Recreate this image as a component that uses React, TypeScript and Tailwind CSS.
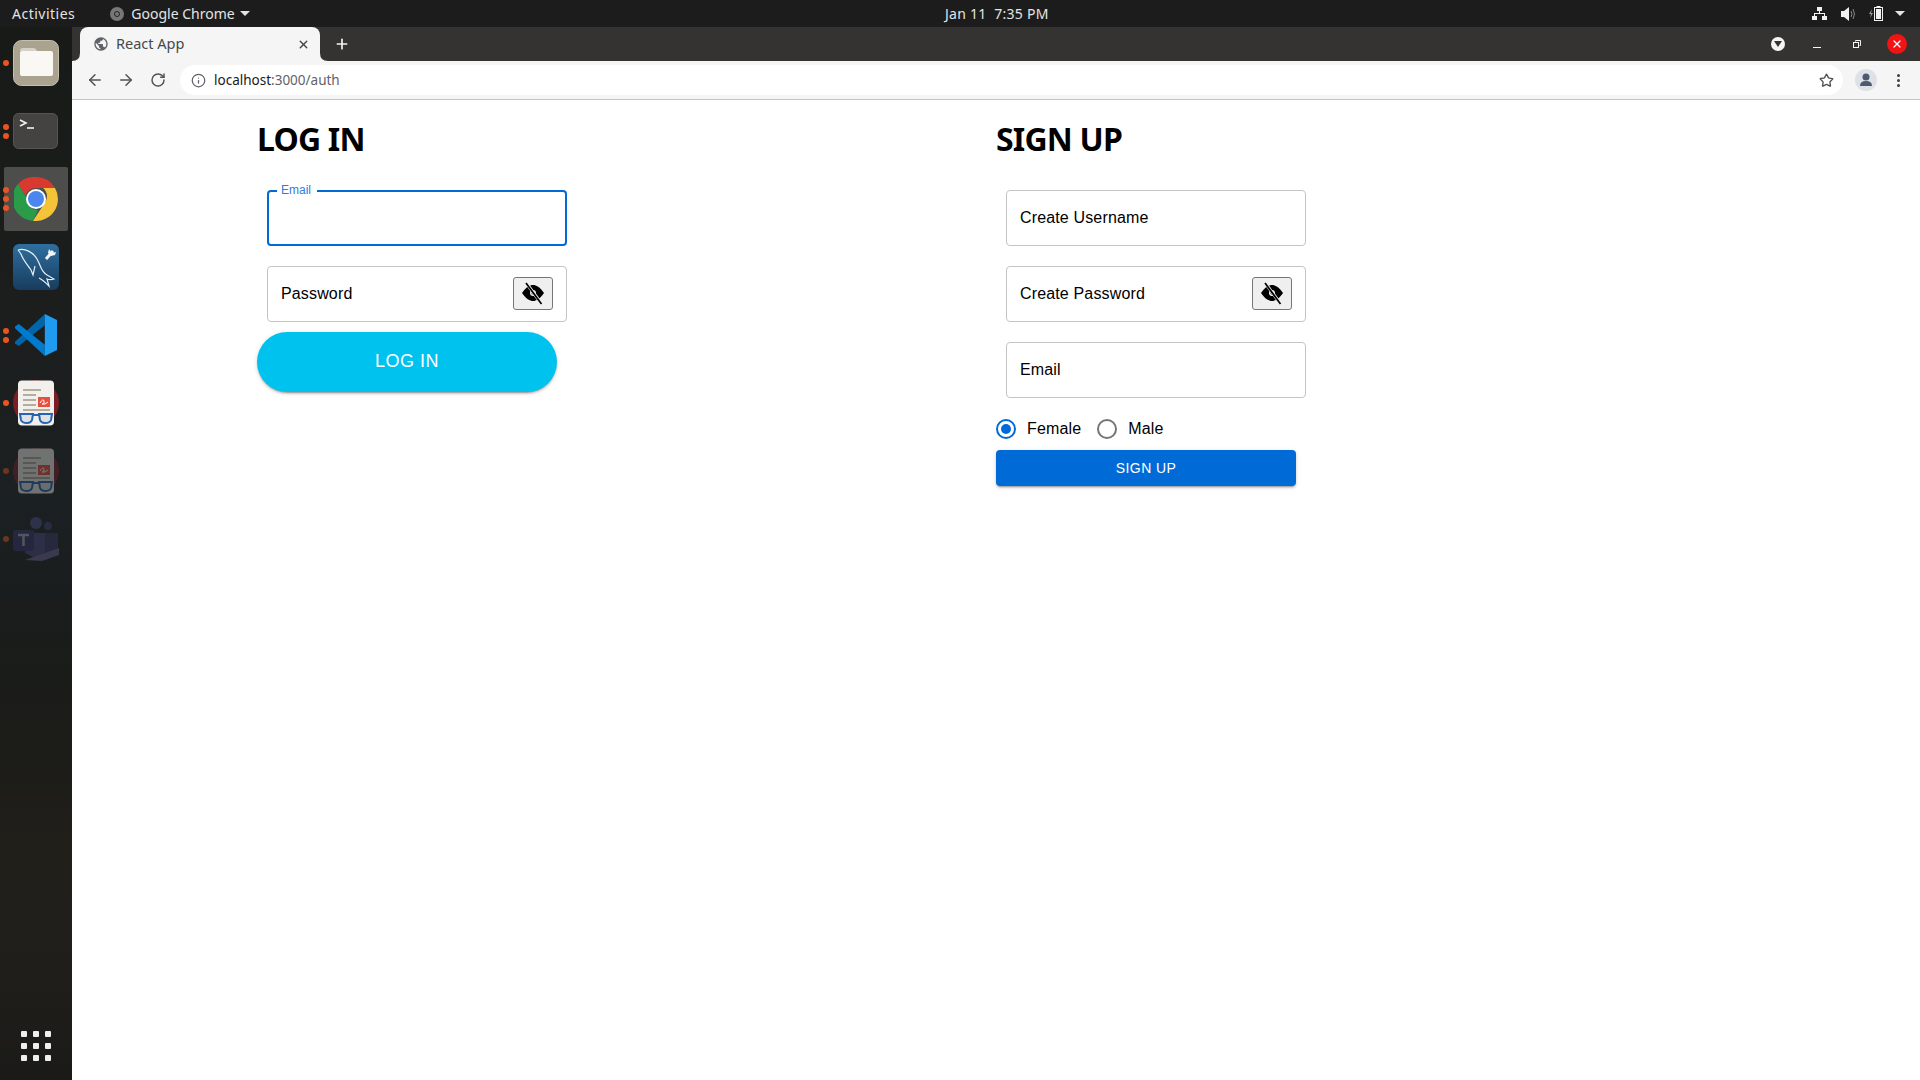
import { ReactNode } from "react";
import { ArrowLeft, ArrowRight, Info, Plus, RotateCw, Star, X } from "lucide-react";
import { MdPublic } from "react-icons/md";

const SANS = "font-['Liberation_Sans',Arial,sans-serif]";
const UI = "font-['Noto_Sans','Open_Sans',sans-serif]";

function EyeOffIcon() {
  return (
    <svg className="mb-[2px]" width="24" height="24" viewBox="0 0 24 24">
      <path d="M1 12C5 6 9 4 12 4C15 4 19 6 23 12C19 18 15 20 12 20C9 20 5 18 1 12Z" fill="#000" />
      <circle cx="12" cy="12" r="3" fill="#efefef" />
      <circle cx="12" cy="12" r="1.500" fill="#000" />
      <path d="M6 3L20 22" stroke="#efefef" strokeWidth="3" />
      <path d="M5 2L20.500 23" stroke="#000" strokeWidth="1.700" />
    </svg>
  );
}

function FilesIcon() {
  return (
    <svg width="46" height="46" viewBox="0 0 46 46">
      <rect x="0.5" y="0.5" width="45" height="45" rx="8" fill="#a9a390" stroke="#c4bfaf" />
      <path d="M7 11q0-3 3-3h10q3 0 4 3h-17z" fill="#d5d0c6" />
      <rect x="7" y="11" width="33" height="25" rx="2" fill="#f9f8f5" />
    </svg>
  );
}

function TerminalIcon() {
  return (
    <svg width="46" height="36" viewBox="0 0 46 36">
      <rect x="0.5" y="0.5" width="44" height="35" rx="5" fill="#444342" stroke="#555" />
      <path d="M7 7l6 3-6 3" fill="none" stroke="#f2f2f2" strokeWidth="1.6" />
      <path d="M14 15h7" stroke="#f2f2f2" strokeWidth="1.6" />
    </svg>
  );
}

function ChromeIcon() {
  return (
    <svg width="44" height="44" viewBox="0 0 44 44">
      <path d="M22 0a22 22 0 0 1 19 11H22a11 11 0 0 0-10.500 7.500L4 7A22 22 0 0 1 22 0z" fill="#d93a30" />
      <path d="M4 7l9.500 15A10 10 0 0 0 24 33l-5 10.800A22 22 0 0 1 4 7z" fill="#2a9b48" />
      <path d="M41 11a22 22 0 0 1-22 32.800L30 27a11 11 0 0 0-1-16z" fill="#f5c338" />
      <circle cx="22" cy="22" r="10" fill="#fff" />
      <circle cx="22" cy="22" r="8" fill="#4a86ee" />
    </svg>
  );
}

function WorkbenchIcon() {
  return (
    <svg width="46" height="46" viewBox="0 0 46 46">
      <defs>
        <linearGradient id="wb" x1="0" y1="0" x2="0" y2="1">
          <stop offset="0" stopColor="#2f6f9f" />
          <stop offset="1" stopColor="#183c5e" />
        </linearGradient>
      </defs>
      <rect width="46" height="46" rx="6" fill="url(#wb)" />
      <path
        d="M5 6C12 4 20 8 24 15C28 22 28 28 34 31L41 35C38 36 36 36 34 35L36 42C32 38 30 36 26 34M5 6L8 10C10 16 14 20 18 26L20 31L22 22"
        fill="none"
        stroke="#e6eef4"
        strokeWidth="1.200"
      />
      <path d="M33 15l7-8" stroke="#f1f5f8" strokeWidth="3" />
      <path d="M36 5l3 4 4-1-1 3-4 1-3-3z" fill="#f1f5f8" />
    </svg>
  );
}

function VsCodeIcon() {
  return (
    <svg width="42" height="42" viewBox="0 0 100 100">
      <path d="M71 0V27L9 76L0 70V66z" fill="#0065a9" />
      <path d="M71 100V73L9 24L0 30V34z" fill="#007acc" />
      <path d="M71 0L100 14V86L71 100z" fill="#1f9cf0" />
    </svg>
  );
}

function DocViewerIcon() {
  return (
    <svg width="46" height="46" viewBox="0 0 46 46">
      <circle cx="23" cy="23" r="23" fill="#7a1e26" />
      <rect x="5" y="0.500" width="36" height="45" rx="4" fill="#f2f0ec" />
      <path d="M10 10h18M10 15h13M10 20h13M10 25h13M10 30h27" stroke="#b5ad9e" strokeWidth="2" />
      <rect x="25" y="17" width="12" height="10" fill="#e8503e" />
      <path d="M27 23q3-5 4-2t-2 3q3 1 6-2" stroke="#fff" strokeWidth="1" fill="none" />
      <path d="M7 34h13l-1 6q-1 3-5 3q-5 0-6-3zM26 34h13l-1 6q-1 3-6 3q-4 0-5-3z" fill="#dfe1e2" stroke="#2563b5" strokeWidth="2" />
      <path d="M20 35h6" stroke="#2563b5" strokeWidth="2" />
    </svg>
  );
}

function TeamsIcon() {
  return (
    <svg width="46" height="44" viewBox="0 0 46 44">
      <circle cx="23" cy="6" r="6" fill="#4c4c8a" />
      <circle cx="35" cy="9" r="4" fill="#3f3f78" />
      <path d="M14 16h22v16l-12 10-12-6z" fill="#47477f" />
      <path d="M32 16h13v16l-13 6z" fill="#38386a" />
      <rect x="0" y="13" width="21" height="21" rx="2" fill="#34346a" />
      <path d="M5 18h11M10.500 18v11" stroke="#a9a9b8" strokeWidth="2.500" />
      <path d="M12 43l34-12v7l-17 6z" fill="#6c6296" />
    </svg>
  );
}

function DockItem({ dots = 0, dim = false, active = false, children }: { dots?: number; dim?: boolean; active?: boolean; children: ReactNode }) {
  return (
    <div className="relative h-[68px] flex items-center justify-center">
      {active && <div className="absolute left-[4px] top-[2px] w-[64px] h-[64px] rounded-[2px] bg-[#4d4d4c]" />}
      <div className={`relative flex ${dim ? "opacity-40" : ""}`}>{children}</div>
      <div className={`absolute left-[3px] top-0 bottom-0 flex flex-col justify-center gap-[3px] ${dim ? "opacity-40" : ""}`}>
        {Array.from({ length: dots }).map((_, i) => (
          <span key={i} className="block w-[6px] h-[6px] rounded-full bg-[#e9541f]" />
        ))}
      </div>
    </div>
  );
}

function Dock() {
  return (
    <aside className="w-[72px] shrink-0 pt-[2px] flex flex-col bg-[linear-gradient(180deg,#171a17_0%,#1b1e1c_25%,#1b2022_45%,#1a1c1b_58%,#1c1c18_68%,#211f1a_80%,#201e1a_90%,#1a1a18_100%)]">
      <DockItem dots={1}><FilesIcon /></DockItem>
      <DockItem dots={2}><TerminalIcon /></DockItem>
      <DockItem dots={3} active><ChromeIcon /></DockItem>
      <DockItem><WorkbenchIcon /></DockItem>
      <DockItem dots={2}><VsCodeIcon /></DockItem>
      <DockItem dots={1}><DocViewerIcon /></DockItem>
      <DockItem dots={1} dim><DocViewerIcon /></DockItem>
      <DockItem dots={1} dim><TeamsIcon /></DockItem>
      <div className="mt-auto mb-[19px] ml-[21px] grid grid-cols-[6px_6px_6px] gap-[6px]">
        {Array.from({ length: 9 }).map((_, i) => (
          <span key={i} className="block w-[6px] h-[6px] bg-[#efefef] rounded-[1px]" />
        ))}
      </div>
    </aside>
  );
}

function TopBar() {
  return (
    <header className={`h-[27px] shrink-0 bg-[#1c1c1c] text-[#e4e4e4] text-[14px] flex items-center relative ${UI}`}>
      <span className="ml-[12px] tracking-[0.5px]">Activities</span>
      <span className="ml-[35px] w-[14px] h-[14px] rounded-full bg-[#777] flex items-center justify-center">
        <span className="w-[6px] h-[6px] rounded-full border border-[#222]" />
      </span>
      <span className="ml-[7px]">Google Chrome</span>
      <svg className="ml-[5px]" width="10" height="5" viewBox="0 0 10 5"><path d="M0 0h10L5 5z" fill="#e4e4e4" /></svg>
      <span className="absolute left-[945px] top-[3px] whitespace-pre text-[14px] tracking-[0.25px]">Jan 11  7:35 PM</span>
      <div className="ml-auto flex items-center mr-[15px]">
        <svg width="15" height="13" viewBox="0 0 15 13" fill="#f0f0f0">
          <rect x="5" y="0" width="5" height="4" />
          <rect x="0" y="9" width="5" height="4" />
          <rect x="10" y="9" width="5" height="4" />
          <path d="M7 4h1v2h5v3h-1V7H3v2H2V6h5z" />
        </svg>
        <svg className="ml-[14px]" width="15" height="14" viewBox="0 0 15 14">
          <path d="M0 4h3l5-4v14l-5-4H0z" fill="#f0f0f0" />
          <path d="M10 4q2 3 0 6M12 2q3 5 0 10" stroke="#888" fill="none" />
        </svg>
        <svg className="ml-[13px]" width="15" height="15" viewBox="0 0 15 15">
          <path d="M3 3L0 8h2l-1 4 3-5H2z" fill="#999" />
          <rect x="7.500" y="0" width="4" height="1.500" fill="#f0f0f0" />
          <rect x="5.500" y="1.500" width="8" height="13" fill="#1c1c1c" stroke="#f0f0f0" />
          <rect x="7" y="3" width="5" height="10" fill="#f0f0f0" />
        </svg>
        <svg className="ml-[11px]" width="10" height="5" viewBox="0 0 10 5"><path d="M0 0h10L5 5z" fill="#e4e4e4" /></svg>
      </div>
    </header>
  );
}

function TabStrip() {
  return (
    <div className={`h-[34px] shrink-0 bg-[#353331] flex items-end ${UI}`}>
      <svg className="self-end" width="8" height="8" viewBox="0 0 8 8"><path d="M0 8q8 0 8-8v8z" fill="#f5f5f5" /></svg>
      <div className="w-[240px] h-[34px] bg-[#f5f5f5] rounded-t-[8px] flex items-center pl-[13px] pr-[10px] text-[14.500px] text-[#45494d]">
        <MdPublic size={16} color="#5f6368" />
        <span className="ml-[7px]">React App</span>
        <X className="ml-auto" size={13} strokeWidth={2.500} color="#444" />
      </div>
      <svg className="self-end" width="8" height="8" viewBox="0 0 8 8"><path d="M0 0q0 8 8 8H0z" fill="#f5f5f5" /></svg>
      <Plus className="ml-[6px] self-center" size={16} strokeWidth={2.500} color="#f5f5f5" />
      <div className="ml-auto self-center flex items-center">
        <span className="w-[14px] h-[14px] rounded-full bg-[#f5f5f5] flex items-center justify-center">
          <svg width="8" height="6" viewBox="0 0 8 6"><path d="M0 0h8L4 6z" fill="#353331" /></svg>
        </span>
        <span className="ml-[28px] w-[8px] h-[1px] mt-[6px] bg-[#f5f5f5]" />
        <svg className="ml-[32px]" width="8" height="8" viewBox="0 0 8 8" fill="none" stroke="#f5f5f5">
          <path d="M2.500 1.500V.5h5v5H6.500" />
          <rect x="0.500" y="2.500" width="5" height="5" />
        </svg>
        <span className="ml-[26px] mr-[13px] w-[20px] h-[20px] rounded-full bg-[#f01414] flex items-center justify-center">
          <X size={12} strokeWidth={2.500} color="#fff" />
        </span>
      </div>
    </div>
  );
}

function Toolbar() {
  return (
    <div className={`h-[39px] shrink-0 bg-[#f5f5f5] border-b border-[#c4c4c4] py-[4px] flex items-center ${UI}`}>
      <ArrowLeft className="ml-[14px]" size={18} strokeWidth={2} color="#505356" />
      <ArrowRight className="ml-[13px]" size={18} strokeWidth={2} color="#505356" />
      <RotateCw className="ml-[15px]" size={16} strokeWidth={2.200} color="#505356" />
      <div className="ml-[14px] h-[30px] w-[1663px] bg-white rounded-full flex items-center pl-[11px] text-[13.500px]">
        <Info size={15} strokeWidth={2} color="#5f6368" />
        <span className="ml-[8px] text-[#1a1a1a]">localhost</span>
        <span className="text-[#5f6368]">:3000/auth</span>
        <Star className="ml-auto mr-[9px]" size={15} strokeWidth={2.200} color="#505356" />
      </div>
      <span className="ml-[12px] w-[22px] h-[22px] rounded-full bg-[#dee1e6] flex items-center justify-center">
        <svg width="14" height="14" viewBox="0 0 14 14" fill="#4f5a72">
          <circle cx="7" cy="4" r="3.500" />
          <path d="M1 13q0-5 6-5t6 5z" />
        </svg>
      </span>
      <span className="ml-[20px] flex flex-col gap-[2px]">
        <span className="w-[3px] h-[3px] rounded-full bg-[#3c4043]" />
        <span className="w-[3px] h-[3px] rounded-full bg-[#3c4043]" />
        <span className="w-[3px] h-[3px] rounded-full bg-[#3c4043]" />
      </span>
    </div>
  );
}

function Field({ label, focused = false, eye = false }: { label: string; focused?: boolean; eye?: boolean }) {
  if (focused) {
    return (
      <div className="relative ml-[10px] w-[300px] h-[56px] border-2 border-[#006bd6] rounded-[4px]">
        <span className="absolute left-[8px] top-[-9px] pl-[4px] pr-[6px] bg-white text-[12px] leading-[14px] text-[#2b7de0]">{label}</span>
      </div>
    );
  }
  return (
    <div className="ml-[10px] w-[300px] h-[56px] border border-[#c4c4c4] rounded-[4px] flex items-center pl-[13px] pr-[13px] text-[16px] tracking-[0.15px] text-black">
      <span>{label}</span>
      {eye && (
        <span className="ml-auto mb-[1px] w-[40px] h-[33px] bg-[#efefef] border border-[#767676] rounded-[3px] flex items-center justify-center">
          <EyeOffIcon />
        </span>
      )}
    </div>
  );
}

function Radio({ label, checked = false }: { label: string; checked?: boolean }) {
  return (
    <span className="flex items-center">
      <span className={`w-[20px] h-[20px] rounded-full border-2 flex items-center justify-center ${checked ? "border-[#006bd6]" : "border-[#757575]"}`}>
        {checked && <span className="w-[10px] h-[10px] rounded-full bg-[#006bd6]" />}
      </span>
      <span className="ml-[11px] text-[16px] tracking-[0.15px] text-black">{label}</span>
    </span>
  );
}

function LoginForm() {
  return (
    <section className="w-[739px] shrink-0">
      <h1 className={`h-[90px] pt-[15px] text-[32px] leading-[48px] font-bold tracking-[-0.8px] text-black ${UI}`}>LOG IN</h1>
      <Field label="Email" focused />
      <div className="mt-[20px]"><Field label="Password" eye /></div>
      <button className="mt-[10px] pb-[2px] w-[300px] h-[60px] rounded-[30px] bg-[#00c2ee] text-white text-[18px] tracking-[0.5px] shadow-[0_3px_1px_-2px_rgba(0,0,0,0.2),0_2px_2px_0_rgba(0,0,0,0.14),0_1px_5px_0_rgba(0,0,0,0.12)]">
        LOG IN
      </button>
    </section>
  );
}

function SignupForm() {
  return (
    <section className="w-[320px] shrink-0">
      <h1 className={`h-[90px] pt-[15px] text-[32px] leading-[48px] font-bold tracking-[-0.8px] text-black ${UI}`}>SIGN UP</h1>
      <Field label="Create Username" />
      <div className="mt-[20px]"><Field label="Create Password" eye /></div>
      <div className="mt-[20px]"><Field label="Email" /></div>
      <div className="mt-[21px] h-[20px] flex items-center gap-[16px]">
        <Radio label="Female" checked />
        <Radio label="Male" />
      </div>
      <button className="mt-[11px] w-[300px] h-[36px] rounded-[4px] bg-[#006bd6] text-white text-[14px] tracking-[0.4px] shadow-[0_3px_1px_-2px_rgba(0,0,0,0.2),0_2px_2px_0_rgba(0,0,0,0.14),0_1px_5px_0_rgba(0,0,0,0.12)]">
        SIGN UP
      </button>
    </section>
  );
}

export default function App() {
  return (
    <div className={`w-[1920px] h-[1080px] overflow-hidden flex flex-col bg-white ${SANS}`}>
      <TopBar />
      <div className="flex flex-1 min-h-0">
        <Dock />
        <div className="flex-1 min-w-0 flex flex-col">
          <TabStrip />
          <Toolbar />
          <main className="flex-1 bg-white pl-[185px] flex items-start">
            <LoginForm />
            <SignupForm />
          </main>
        </div>
      </div>
    </div>
  );
}
